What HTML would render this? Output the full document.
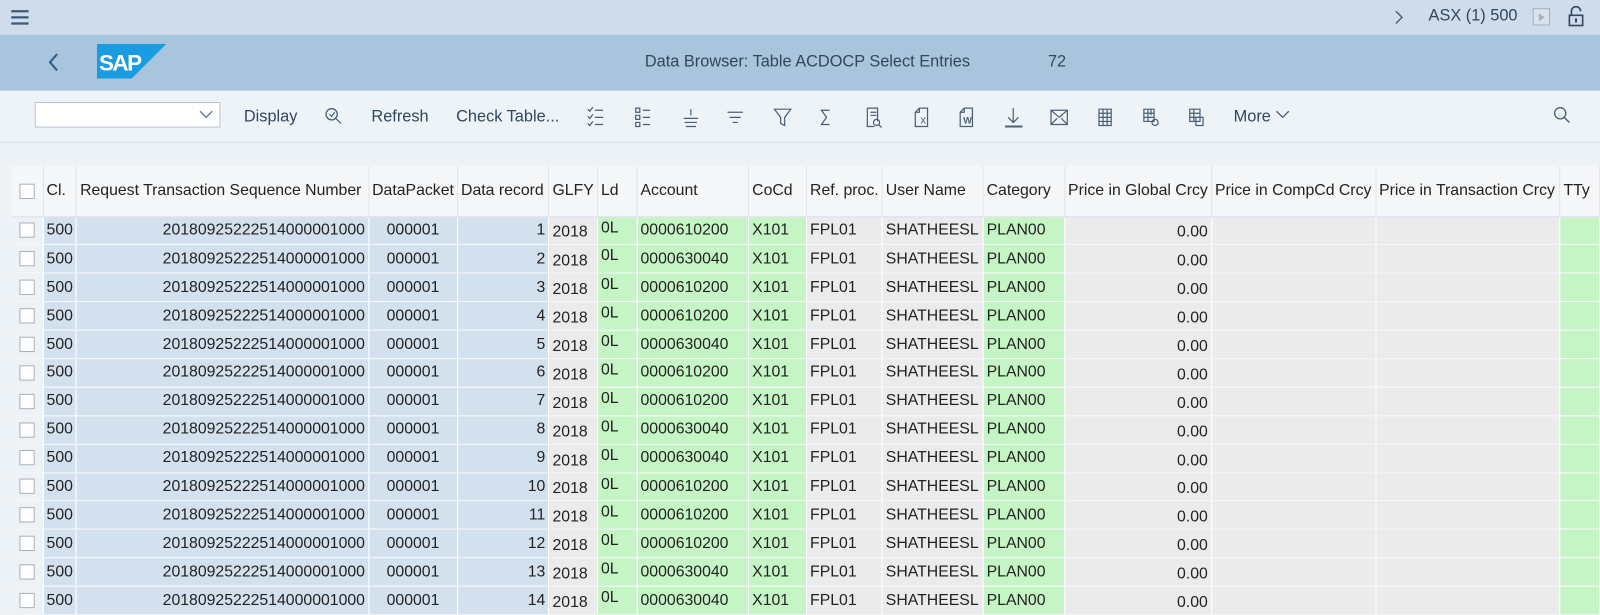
<!DOCTYPE html>
<html><head><meta charset="utf-8"><style>
*{margin:0;padding:0;box-sizing:border-box}
body{width:1600px;height:608px;overflow:hidden;background:#edf2f6;font-family:"Liberation Sans",Arial,sans-serif;color:#222;position:relative}
#w{position:absolute;left:0;top:0;width:1568px;height:596px;transform:scale(1.0204);transform-origin:0 0}
.top{position:absolute;left:0;top:0;width:1600px;height:34px;background:#cfdceb}
.hdr{position:absolute;left:0;top:34px;width:1600px;height:55px;background:#a9c4dd}
.tb{position:absolute;left:0;top:89px;width:1600px;height:51px;background:#eef3f8;border-bottom:1px solid #d8dee5}
.t{position:absolute;font-size:16px;color:#32475e;white-space:nowrap}
svg{position:absolute}
table{position:absolute;left:12px;top:163px;border-collapse:collapse;table-layout:fixed;font-size:15.5px}
td,th{height:27.9px;white-space:nowrap;overflow:hidden;padding:0 3px;border-right:1px solid #fff;border-bottom:1px solid #f4f6f8}
th{height:49px;font-weight:normal;text-align:left;background:#f6f7f8;border-right:1px solid #e4e6e8;border-bottom:1px solid #dde}
.k{background:#d3e1ef}.g{background:#ebebeb}.v{background:#c6f5c5}
.r{text-align:right}.c{text-align:center}
.cb{display:inline-block;width:15px;height:15px;border:1px solid #a8b0b8;background:#fff;vertical-align:middle}
td.ck{background:#edf2f6;text-align:center}
th.ck{text-align:center}
.lo{padding-top:5px}.hi{vertical-align:top;padding-top:2px}
</style></head><body><div id="w">
<div class="top"></div>
<svg style="left:10px;top:9px" width="20" height="16"><path d="M1 2h17M1 8h17M1 14h17" stroke="#3e5a78" stroke-width="2.2"/></svg>
<svg style="left:1366px;top:10px" width="10" height="14"><path d="M2 1l6 6-6 6" stroke="#4a5f77" fill="none" stroke-width="1.4"/></svg>
<div class="t" style="left:1400px;top:7px;font-size:16px">ASX (1) 500</div>
<svg style="left:1502px;top:8px" width="18" height="18"><rect x="0.5" y="0.5" width="16" height="16" fill="#d9e3ee" stroke="#9fb1c4"/><path d="M6 5l6 4-6 4z" fill="#a3b3c3"/></svg>
<svg style="left:1536px;top:5px" width="18" height="22"><path d="M4 10V6a4.5 4.5 0 0 1 9 0" stroke="#33475d" fill="none" stroke-width="1.6"/><rect x="2" y="10" width="13" height="10" fill="none" stroke="#33475d" stroke-width="1.6"/><rect x="7.5" y="13" width="2" height="4" fill="#33475d"/></svg>
<div class="hdr"></div>
<svg style="left:47px;top:51px" width="12" height="20"><path d="M9 2L2 10l7 8" stroke="#2f5a88" fill="none" stroke-width="2"/></svg>
<svg style="left:95px;top:43px" width="68" height="34"><path d="M0 0h68L34 34H0z" fill="#1a9ce0"/><text x="2" y="26" font-family="Liberation Sans" font-weight="bold" font-size="22" fill="#fff" letter-spacing="-1.5">SAP</text></svg>
<div class="t" style="left:632px;top:52px">Data Browser: Table ACDOCP Select Entries</div>
<div class="t" style="left:1027px;top:52px">72</div>
<div class="tb"></div>
<div style="position:absolute;left:34px;top:100px;width:182px;height:25px;background:#fff;border:1px solid #b8c2cc"></div>
<svg style="left:195px;top:108px" width="14" height="9"><path d="M1 1l6 6 6-6" stroke="#5b6f84" fill="none" stroke-width="1.2"/></svg>
<div class="t" style="left:239px;top:106px">Display</div>
<svg style="left:318px;top:105px" width="18" height="18"><circle cx="7" cy="7" r="5.5" stroke="#4a5f77" fill="none" stroke-width="1.3"/><path d="M11 11l5 5M5 7l2 2 3-4" stroke="#4a5f77" fill="none" stroke-width="1.2"/></svg>
<div class="t" style="left:364px;top:106px">Refresh</div>
<div class="t" style="left:447px;top:106px">Check Table...</div>
<svg style="left:575px;top:104px" width="720" height="22" stroke="#4a5f77" fill="none" stroke-width="1.2">
<path d="M1 3l2 2 3-4M1 10l2 2 3-4M1 17l2 2 3-4M8 4h8M8 11h8M8 18h8"/>
<path d="M48 2h4v4h-4zM48 9h4v4h-4zM48 16h4v4h-4zM55 4h7M55 11h7M55 18h7"/>
<path d="M95 12h14M96 16h12M97 20h10M102 3v6"/>
<path d="M138 6h15M140 11h11M143 16h5"/>
<path d="M184 3h16l-6 8v8l-4-2v-6z"/>
<path d="M238 4h-8l5 7-5 7h8"/>
<path d="M275 2h10v13M275 2v18h7M278 6h6M278 9h6"/><circle cx="284" cy="16" r="3"/><path d="M286 18l3 3"/>
<path d="M326 2h8v18h-12V6zM322 6h4V2"/><text x="327" y="17" font-size="11" fill="#4a5f77" stroke="none" font-family="Liberation Sans">x</text>
<path d="M370 2h8v18h-12V6zM366 6h4V2"/><text x="369" y="17" font-size="9" fill="#4a5f77" stroke="none" font-weight="bold" font-family="Liberation Sans">W</text>
<path d="M418 2v14M413 11l5 5 5-5"/><path d="M410 20h17" stroke-width="2"/>
<path d="M455 4h16v14h-16zM455 4l8 7 8-7M455 18l6-6M471 18l-6-6"/>
<path d="M502 3h12v16h-12zM502 7h12M502 11h12M502 15h12M506 3v16M510 3v16"/>
<path d="M546 3h10v12h-10zM546 7h10M546 11h10M550 3v12M553 3v6"/><circle cx="557" cy="16" r="3"/>
<path d="M591 3h10v12h-10zM591 7h10M591 11h10M595 3v12"/><rect x="597" y="11" width="7" height="8"/>
</svg>
<div class="t" style="left:1209px;top:106px">More</div>
<svg style="left:1250px;top:108px" width="14" height="9"><path d="M1 1l6 6 6-6" stroke="#4a5f77" fill="none" stroke-width="1.3"/></svg>
<svg style="left:1522px;top:104px" width="18" height="18"><circle cx="7" cy="7" r="5.5" stroke="#4a5f77" fill="none" stroke-width="1.3"/><path d="M11 11l5 5" stroke="#4a5f77" stroke-width="1.4"/></svg>

<table>
<colgroup><col style="width:32px"><col style="width:31px"><col style="width:287px"><col style="width:85px"><col style="width:90px"><col style="width:43px"><col style="width:42px"><col style="width:113px"><col style="width:59px"><col style="width:72px"><col style="width:99px"><col style="width:82px"><col style="width:144px"><col style="width:161px"><col style="width:181px"><col style="width:40px"></colgroup>
<tr><th class="ck"><span class="cb"></span></th><th>Cl.</th><th>Request Transaction Sequence Number</th><th>DataPacket</th><th>Data record</th><th style="border-left:1px solid #444">GLFY</th><th>Ld</th><th>Account</th><th>CoCd</th><th>Ref. proc.</th><th>User Name</th><th>Category</th><th>Price in Global Crcy</th><th>Price in CompCd Crcy</th><th>Price in Transaction Crcy</th><th>TTy</th></tr>
<tr><td class="ck"><span class="cb"></span></td><td class="k">500</td><td class="k r">20180925222514000001000</td><td class="k c">000001</td><td class="k r">1</td><td class="g lo" style="border-left:1px solid #444">2018</td><td class="v hi">0L</td><td class="v">0000610200</td><td class="v">X101</td><td class="g">FPL01</td><td class="g">SHATHEESL</td><td class="v">PLAN00</td><td class="g r lo">0.00</td><td class="g"></td><td class="g"></td><td class="v"></td></tr>
<tr><td class="ck"><span class="cb"></span></td><td class="k">500</td><td class="k r">20180925222514000001000</td><td class="k c">000001</td><td class="k r">2</td><td class="g lo" style="border-left:1px solid #444">2018</td><td class="v hi">0L</td><td class="v">0000630040</td><td class="v">X101</td><td class="g">FPL01</td><td class="g">SHATHEESL</td><td class="v">PLAN00</td><td class="g r lo">0.00</td><td class="g"></td><td class="g"></td><td class="v"></td></tr>
<tr><td class="ck"><span class="cb"></span></td><td class="k">500</td><td class="k r">20180925222514000001000</td><td class="k c">000001</td><td class="k r">3</td><td class="g lo" style="border-left:1px solid #444">2018</td><td class="v hi">0L</td><td class="v">0000610200</td><td class="v">X101</td><td class="g">FPL01</td><td class="g">SHATHEESL</td><td class="v">PLAN00</td><td class="g r lo">0.00</td><td class="g"></td><td class="g"></td><td class="v"></td></tr>
<tr><td class="ck"><span class="cb"></span></td><td class="k">500</td><td class="k r">20180925222514000001000</td><td class="k c">000001</td><td class="k r">4</td><td class="g lo" style="border-left:1px solid #444">2018</td><td class="v hi">0L</td><td class="v">0000610200</td><td class="v">X101</td><td class="g">FPL01</td><td class="g">SHATHEESL</td><td class="v">PLAN00</td><td class="g r lo">0.00</td><td class="g"></td><td class="g"></td><td class="v"></td></tr>
<tr><td class="ck"><span class="cb"></span></td><td class="k">500</td><td class="k r">20180925222514000001000</td><td class="k c">000001</td><td class="k r">5</td><td class="g lo" style="border-left:1px solid #444">2018</td><td class="v hi">0L</td><td class="v">0000630040</td><td class="v">X101</td><td class="g">FPL01</td><td class="g">SHATHEESL</td><td class="v">PLAN00</td><td class="g r lo">0.00</td><td class="g"></td><td class="g"></td><td class="v"></td></tr>
<tr><td class="ck"><span class="cb"></span></td><td class="k">500</td><td class="k r">20180925222514000001000</td><td class="k c">000001</td><td class="k r">6</td><td class="g lo" style="border-left:1px solid #444">2018</td><td class="v hi">0L</td><td class="v">0000610200</td><td class="v">X101</td><td class="g">FPL01</td><td class="g">SHATHEESL</td><td class="v">PLAN00</td><td class="g r lo">0.00</td><td class="g"></td><td class="g"></td><td class="v"></td></tr>
<tr><td class="ck"><span class="cb"></span></td><td class="k">500</td><td class="k r">20180925222514000001000</td><td class="k c">000001</td><td class="k r">7</td><td class="g lo" style="border-left:1px solid #444">2018</td><td class="v hi">0L</td><td class="v">0000610200</td><td class="v">X101</td><td class="g">FPL01</td><td class="g">SHATHEESL</td><td class="v">PLAN00</td><td class="g r lo">0.00</td><td class="g"></td><td class="g"></td><td class="v"></td></tr>
<tr><td class="ck"><span class="cb"></span></td><td class="k">500</td><td class="k r">20180925222514000001000</td><td class="k c">000001</td><td class="k r">8</td><td class="g lo" style="border-left:1px solid #444">2018</td><td class="v hi">0L</td><td class="v">0000630040</td><td class="v">X101</td><td class="g">FPL01</td><td class="g">SHATHEESL</td><td class="v">PLAN00</td><td class="g r lo">0.00</td><td class="g"></td><td class="g"></td><td class="v"></td></tr>
<tr><td class="ck"><span class="cb"></span></td><td class="k">500</td><td class="k r">20180925222514000001000</td><td class="k c">000001</td><td class="k r">9</td><td class="g lo" style="border-left:1px solid #444">2018</td><td class="v hi">0L</td><td class="v">0000630040</td><td class="v">X101</td><td class="g">FPL01</td><td class="g">SHATHEESL</td><td class="v">PLAN00</td><td class="g r lo">0.00</td><td class="g"></td><td class="g"></td><td class="v"></td></tr>
<tr><td class="ck"><span class="cb"></span></td><td class="k">500</td><td class="k r">20180925222514000001000</td><td class="k c">000001</td><td class="k r">10</td><td class="g lo" style="border-left:1px solid #444">2018</td><td class="v hi">0L</td><td class="v">0000610200</td><td class="v">X101</td><td class="g">FPL01</td><td class="g">SHATHEESL</td><td class="v">PLAN00</td><td class="g r lo">0.00</td><td class="g"></td><td class="g"></td><td class="v"></td></tr>
<tr><td class="ck"><span class="cb"></span></td><td class="k">500</td><td class="k r">20180925222514000001000</td><td class="k c">000001</td><td class="k r">11</td><td class="g lo" style="border-left:1px solid #444">2018</td><td class="v hi">0L</td><td class="v">0000610200</td><td class="v">X101</td><td class="g">FPL01</td><td class="g">SHATHEESL</td><td class="v">PLAN00</td><td class="g r lo">0.00</td><td class="g"></td><td class="g"></td><td class="v"></td></tr>
<tr><td class="ck"><span class="cb"></span></td><td class="k">500</td><td class="k r">20180925222514000001000</td><td class="k c">000001</td><td class="k r">12</td><td class="g lo" style="border-left:1px solid #444">2018</td><td class="v hi">0L</td><td class="v">0000610200</td><td class="v">X101</td><td class="g">FPL01</td><td class="g">SHATHEESL</td><td class="v">PLAN00</td><td class="g r lo">0.00</td><td class="g"></td><td class="g"></td><td class="v"></td></tr>
<tr><td class="ck"><span class="cb"></span></td><td class="k">500</td><td class="k r">20180925222514000001000</td><td class="k c">000001</td><td class="k r">13</td><td class="g lo" style="border-left:1px solid #444">2018</td><td class="v hi">0L</td><td class="v">0000630040</td><td class="v">X101</td><td class="g">FPL01</td><td class="g">SHATHEESL</td><td class="v">PLAN00</td><td class="g r lo">0.00</td><td class="g"></td><td class="g"></td><td class="v"></td></tr>
<tr><td class="ck"><span class="cb"></span></td><td class="k">500</td><td class="k r">20180925222514000001000</td><td class="k c">000001</td><td class="k r">14</td><td class="g lo" style="border-left:1px solid #444">2018</td><td class="v hi">0L</td><td class="v">0000630040</td><td class="v">X101</td><td class="g">FPL01</td><td class="g">SHATHEESL</td><td class="v">PLAN00</td><td class="g r lo">0.00</td><td class="g"></td><td class="g"></td><td class="v"></td></tr>
</table>
</div></body></html>
